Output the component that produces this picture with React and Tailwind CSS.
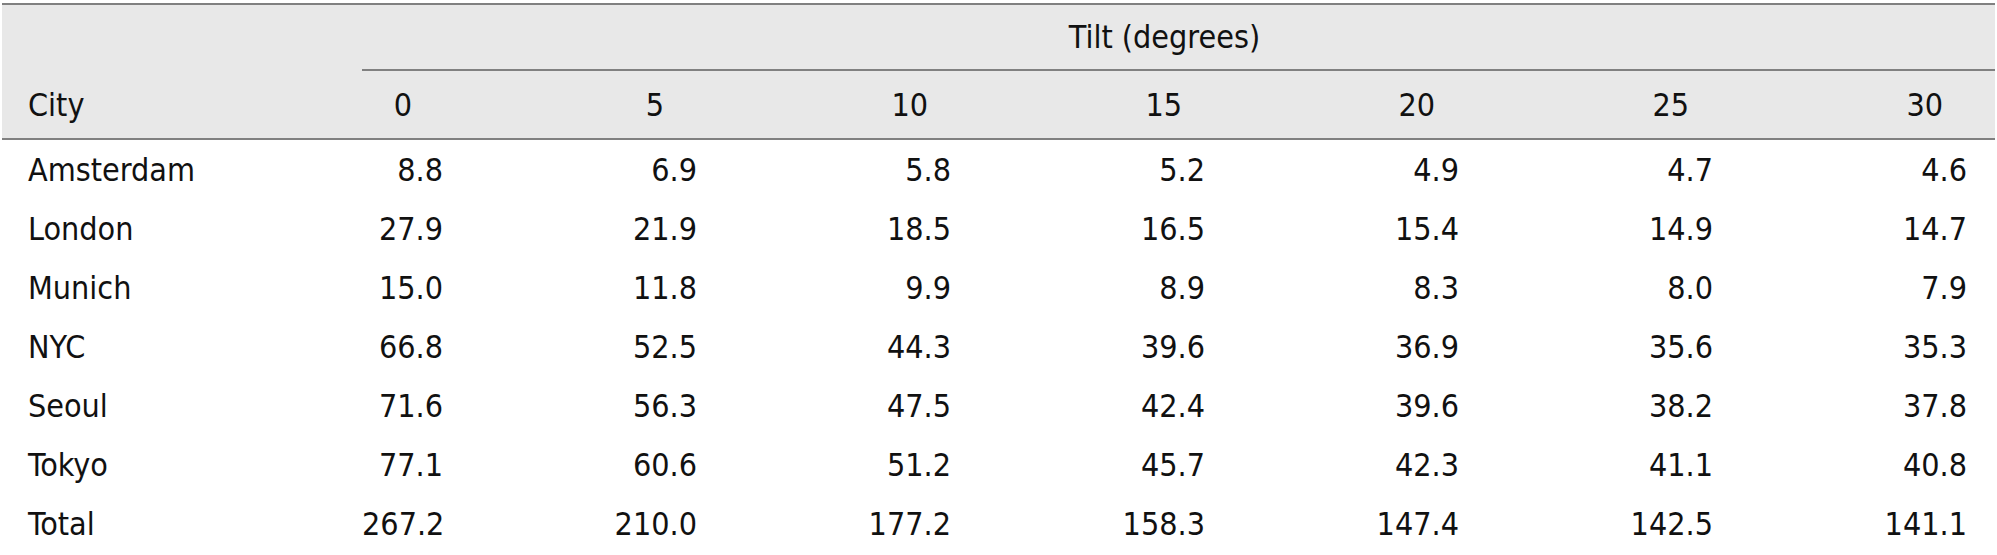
const columns = [
  { label: '0', pad: 'pr-[58px]' },
  { label: '5', pad: 'pr-[60px]' },
  { label: '10', pad: 'pr-[50px]' },
  { label: '15', pad: 'pr-[50px]' },
  { label: '20', pad: 'pr-[51px]' },
  { label: '25', pad: 'pr-[51px]' },
  { label: '30', pad: 'pr-[51px]' },
];

const rows = [
  ['Amsterdam', '8.8', '6.9', '5.8', '5.2', '4.9', '4.7', '4.6'],
  ['London', '27.9', '21.9', '18.5', '16.5', '15.4', '14.9', '14.7'],
  ['Munich', '15.0', '11.8', '9.9', '8.9', '8.3', '8.0', '7.9'],
  ['NYC', '66.8', '52.5', '44.3', '39.6', '36.9', '35.6', '35.3'],
  ['Seoul', '71.6', '56.3', '47.5', '42.4', '39.6', '38.2', '37.8'],
  ['Tokyo', '77.1', '60.6', '51.2', '45.7', '42.3', '41.1', '40.8'],
  ['Total', '267.2', '210.0', '177.2', '158.3', '147.4', '142.5', '141.1'],
];

const grid = 'grid grid-cols-[360px_108px_repeat(6,254px)] items-center';

export default function App() {
  return (
    <div className="min-h-[555px] bg-white pt-[3px] pl-[2px]">
      <div className="w-[1993px] font-['Liberation_Sans_Narrow','DejaVu_Sans_Condensed',sans-serif] text-[32px] leading-none text-[#111]">
        {/* header */}
        <div className="border-y-2 border-[#808080] bg-[#e8e8e8]">
          <div className="grid grid-cols-[360px_1fr]">
            <div />
            <div className="flex h-[66px] items-center justify-center border-b-2 border-[#808080] pr-[28px]">
              Tilt (degrees)
            </div>
          </div>
          <div className={`${grid} h-[67px]`}>
            <div className="pl-[26px]">City</div>
            {columns.map(col => (
              <div key={col.label} className={`text-right ${col.pad}`}>{col.label}</div>
            ))}
          </div>
        </div>

        {/* body */}
        {rows.map(([city, ...values]) => (
          <div key={city} className={`${grid} h-[59px]`}>
            <div className="pl-[26px]">{city}</div>
            {values.map((v, i) => (
              <div key={i} className="pr-[27px] text-right">{v}</div>
            ))}
          </div>
        ))}
      </div>
    </div>
  );
}
